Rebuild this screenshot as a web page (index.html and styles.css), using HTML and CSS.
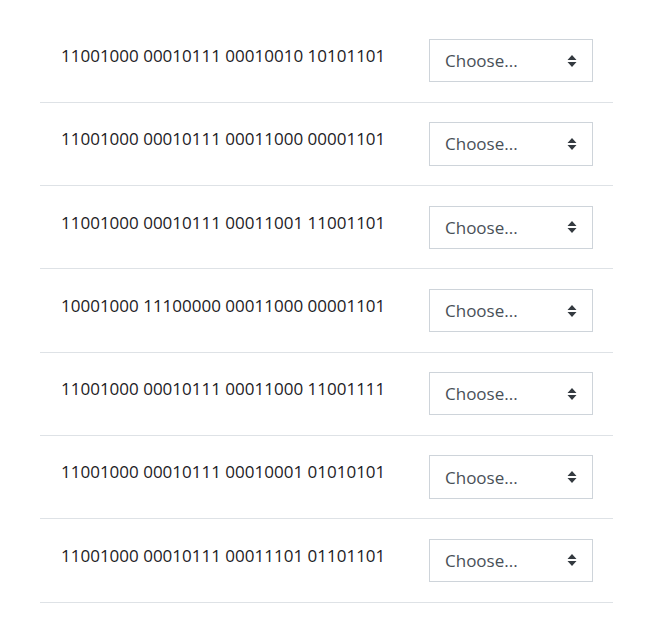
FILE: index.html
```html
<!DOCTYPE html>
<html lang="en">
<head>
<meta charset="utf-8">
<title>Match</title>
<link rel="stylesheet" href="styles.css">
</head>
<body>
<div class="answers">
  <div class="row"><div class="label">11001000 00010111 00010010 10101101</div><select class="choice"><option>Choose...</option></select></div>
  <div class="row"><div class="label">11001000 00010111 00011000 00001101</div><select class="choice"><option>Choose...</option></select></div>
  <div class="row"><div class="label">11001000 00010111 00011001 11001101</div><select class="choice"><option>Choose...</option></select></div>
  <div class="row"><div class="label">10001000 11100000 00011000 00001101</div><select class="choice"><option>Choose...</option></select></div>
  <div class="row"><div class="label">11001000 00010111 00011000 11001111</div><select class="choice"><option>Choose...</option></select></div>
  <div class="row"><div class="label">11001000 00010111 00010001 01010101</div><select class="choice"><option>Choose...</option></select></div>
  <div class="row"><div class="label">11001000 00010111 00011101 01101101</div><select class="choice"><option>Choose...</option></select></div>
</div>
</body>
</html>
```
FILE: styles.css
```css
html, body {
  margin: 0;
  padding: 0;
  background: #fff;
}
body {
  font-family: "Open Sans", "Noto Sans", sans-serif;
  font-size: 17px;
  color: #1d2125;
}
.answers {
  margin: 19.5px 0 0 40px;
  width: 573px;
}
.row {
  display: flex;
  align-items: flex-start;
  justify-content: space-between;
  padding: 19.5px 20px 19.5px 21px;
  border-bottom: 1px solid #dee2e6;
}
.label {
  margin-top: 4px;
  line-height: 25.5px;
  white-space: nowrap;
}
.choice {
  -webkit-appearance: none;
  appearance: none;
  box-sizing: border-box;
  width: 164px;
  height: 43.3px;
  margin: 0;
  padding: 0 30px 0 15px;
  font-family: "Open Sans", "Noto Sans", sans-serif;
  font-size: 17px;
  color: #495057;
  background-color: #fff;
  border: 1px solid #ced4da;
  border-radius: 0;
  background-image: url("data:image/svg+xml,%3Csvg xmlns='http://www.w3.org/2000/svg' width='10' height='12' viewBox='0 0 10 12'%3E%3Cpath fill='%23343a40' d='M5 0L9.5 5H0.5z M5 12L0.5 7H9.5z'/%3E%3C/svg%3E");
  background-repeat: no-repeat;
  background-position: right 15px center;
  background-size: 10px 12px;
}
```
